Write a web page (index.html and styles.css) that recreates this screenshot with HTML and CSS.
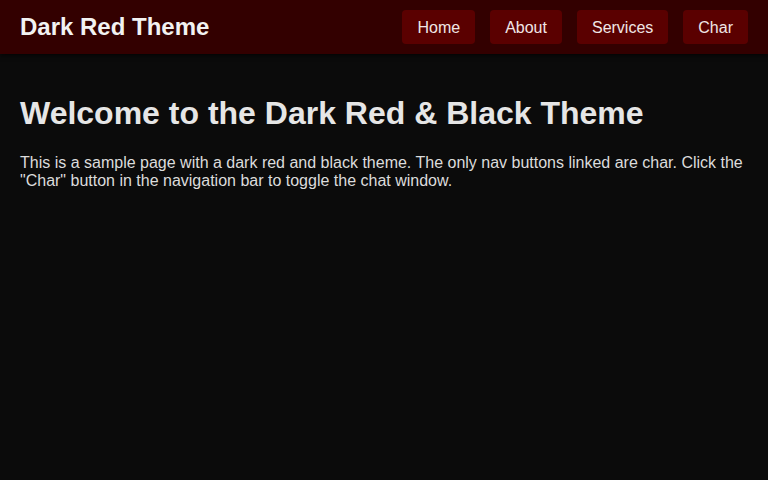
FILE: index.html
```html
<!DOCTYPE html>
<html lang="en">
<head>
<meta charset="utf-8">
<title>Dark Red Theme</title>
<link rel="stylesheet" href="styles.css">
</head>
<body>
<header class="topbar">
  <h1 class="brand">Dark Red Theme</h1>
  <nav class="nav">
    <button class="nav-btn">Home</button>
    <button class="nav-btn">About</button>
    <button class="nav-btn">Services</button>
    <button class="nav-btn">Char</button>
  </nav>
</header>
<main class="content">
  <h1 class="title">Welcome to the Dark Red &amp; Black Theme</h1>
  <p class="text">This is a sample page with a dark red and black theme. The only nav buttons linked are char. Click the "Char" button in the navigation bar to toggle the chat window.</p>
</main>
</body>
</html>
```
FILE: styles.css
```css
html, body {
  margin: 0;
  padding: 0;
}
body {
  background: #0b0b0b;
  color: #e0e0e0;
  font-family: "Liberation Sans", Arial, sans-serif;
  height: 480px;
}
.topbar {
  display: flex;
  align-items: center;
  justify-content: space-between;
  padding: 10px 20px;
  background: #330000;
  box-shadow: 0 2px 4px rgba(0,0,0,0.6);
}
.brand {
  margin: 0;
  font-size: 24px;
  font-weight: bold;
  color: #f2f2f2;
}
.nav {
  display: flex;
  gap: 15px;
}
.nav-btn {
  font-family: "Liberation Sans", Arial, sans-serif;
  font-size: 16px;
  line-height: 18px;
  padding: 9px 15px 7px;
  height: 34px;
  border: none;
  border-radius: 4px;
  background: #5a0000;
  color: #f0e6e6;
  cursor: pointer;
}
.content {
  padding: 20px;
}
.title {
  font-size: 32px;
  font-weight: bold;
  margin: 21.44px 0;
  color: #e6e6e6;
}
.text {
  font-size: 16px;
  line-height: 18px;
  margin: 18px 0;
  color: #dcdcdc;
}
```
